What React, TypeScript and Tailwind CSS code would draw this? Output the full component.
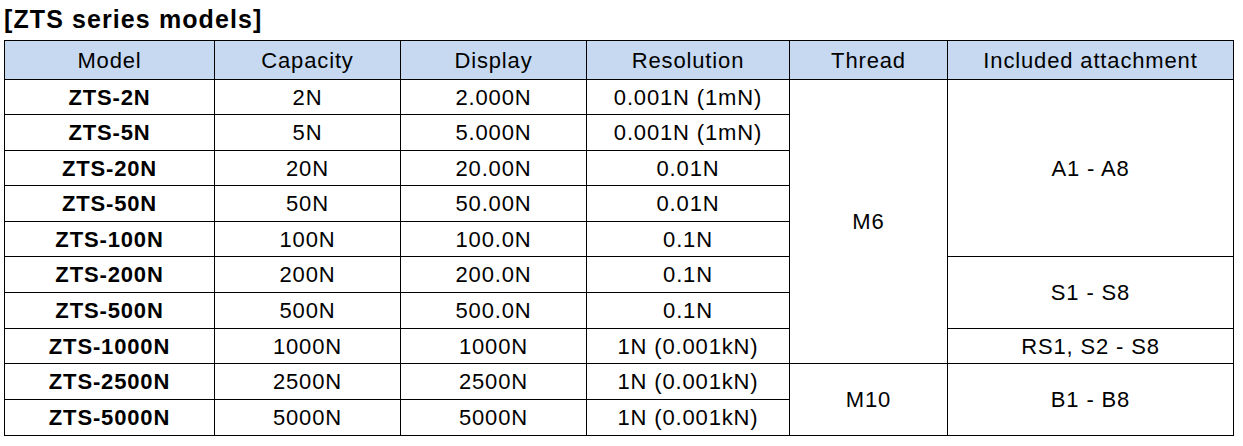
const headers = ["Model", "Capacity", "Display", "Resolution", "Thread", "Included attachment"];

const rows = [
  { model: "ZTS-2N", capacity: "2N", display: "2.000N", resolution: "0.001N (1mN)", h: "h-[35px]" },
  { model: "ZTS-5N", capacity: "5N", display: "5.000N", resolution: "0.001N (1mN)", h: "h-[36px]" },
  { model: "ZTS-20N", capacity: "20N", display: "20.00N", resolution: "0.01N", h: "h-[35px]" },
  { model: "ZTS-50N", capacity: "50N", display: "50.00N", resolution: "0.01N", h: "h-[36px]" },
  { model: "ZTS-100N", capacity: "100N", display: "100.0N", resolution: "0.1N", h: "h-[35px]" },
  { model: "ZTS-200N", capacity: "200N", display: "200.0N", resolution: "0.1N", h: "h-[36px]" },
  { model: "ZTS-500N", capacity: "500N", display: "500.0N", resolution: "0.1N", h: "h-[36px]" },
  { model: "ZTS-1000N", capacity: "1000N", display: "1000N", resolution: "1N (0.001kN)", h: "h-[35px]" },
  { model: "ZTS-2500N", capacity: "2500N", display: "2500N", resolution: "1N (0.001kN)", h: "h-[36px]" },
  { model: "ZTS-5000N", capacity: "5000N", display: "5000N", resolution: "1N (0.001kN)", h: "h-[36px]" },
];

// merged cells, keyed by the row index where they start
const thread: Record<number, { text: string; span: number }> = {
  0: { text: "M6", span: 8 },
  8: { text: "M10", span: 2 },
};
const attachment: Record<number, { text: string; span: number }> = {
  0: { text: "A1 - A8", span: 5 },
  5: { text: "S1 - S8", span: 2 },
  7: { text: "RS1, S2 - S8", span: 1 },
  8: { text: "B1 - B8", span: 2 },
};

const cell = "border-r border-b border-black text-center align-middle p-0";

export default function App() {
  return (
    <div className="w-[1243px] h-[446px] bg-white text-black font-['Liberation_Sans',Arial,sans-serif]">
      <div className="h-[40px] pt-[7px] pl-[4px] text-[25px] leading-[25px] font-bold tracking-[1.1px]">
        [ZTS series models]
      </div>
      <table className="ml-[4px] w-[1230px] table-fixed border-separate border-spacing-0 border-t border-l border-black text-[22px] tracking-[0.85px]">
        <colgroup>
          <col className="w-[210px]" />
          <col className="w-[186px]" />
          <col className="w-[186px]" />
          <col className="w-[203px]" />
          <col className="w-[158px]" />
          <col className="w-[286px]" />
        </colgroup>
        <thead>
          <tr className="h-[39px]">
            {headers.map((h) => (
              <th key={h} className={`${cell} bg-[#c6d9f1] font-normal`}>
                {h}
              </th>
            ))}
          </tr>
        </thead>
        <tbody>
          {rows.map((r, i) => (
            <tr key={r.model} className={r.h}>
              <td className={`${cell} font-bold`}>{r.model}</td>
              <td className={cell}>{r.capacity}</td>
              <td className={cell}>{r.display}</td>
              <td className={cell}>{r.resolution}</td>
              {thread[i] && (
                <td rowSpan={thread[i].span} className={cell}>
                  {thread[i].text}
                </td>
              )}
              {attachment[i] && (
                <td rowSpan={attachment[i].span} className={cell}>
                  {attachment[i].text}
                </td>
              )}
            </tr>
          ))}
        </tbody>
      </table>
    </div>
  );
}
